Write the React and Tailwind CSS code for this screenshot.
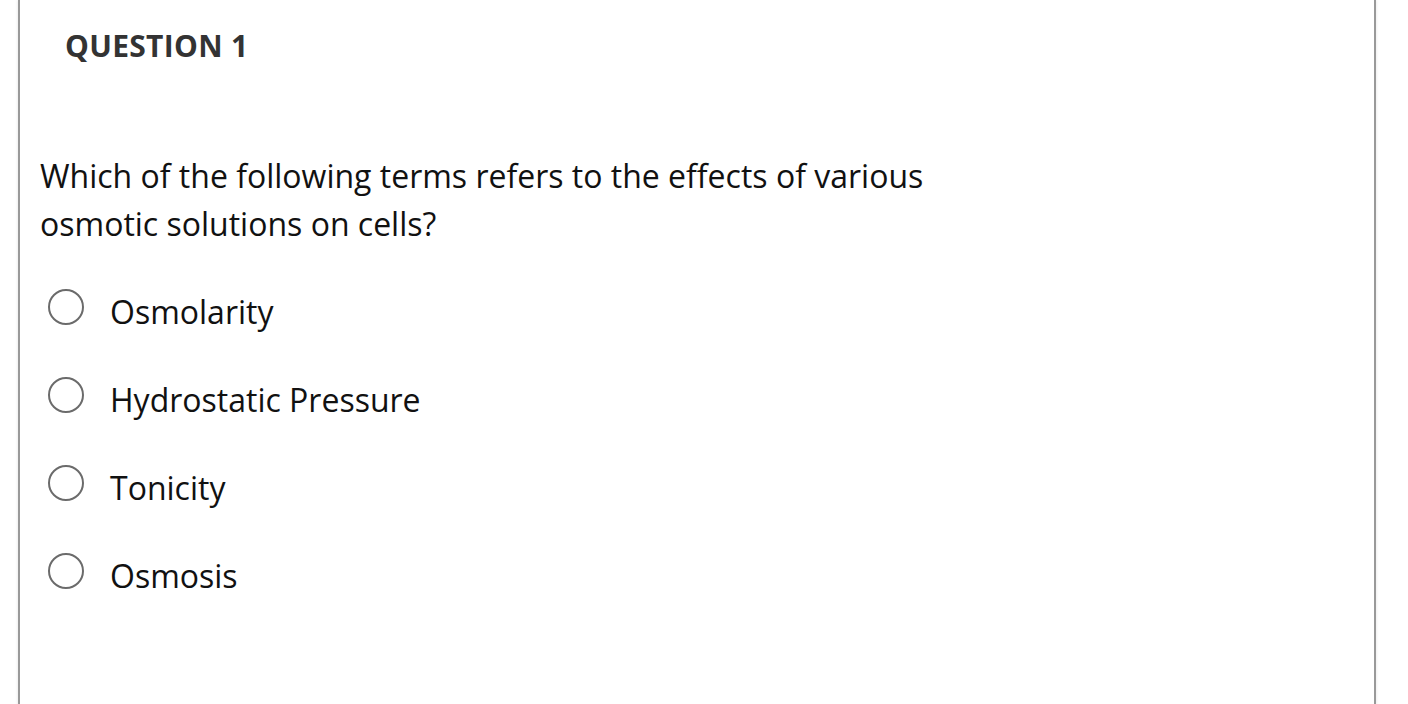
const options = ["Osmolarity", "Hydrostatic Pressure", "Tonicity", "Osmosis"];

function Radio() {
  return (
    <span className="block w-[36px] h-[36px] rounded-full border-2 border-[#6b6b6b] bg-white shrink-0" />
  );
}

export default function App() {
  return (
    <div className="w-[1408px] h-[704px] overflow-hidden bg-white font-['Open_Sans',sans-serif]">
      <div className="ml-[18px] w-[1358px] h-[720px] border-x-2 border-[#999999] bg-white shadow-[0_0_3px_rgba(0,0,0,0.12)]">
        <h2 className="pl-[45px] pt-[26px] text-[30px] leading-[40px] font-bold text-[#333333] tracking-[0.3px]">
          QUESTION 1
        </h2>
        <p className="mt-[86px] pl-[20px] w-[960px] text-[32px] leading-[48px] text-[#111111]">
          Which of the following terms refers to the effects of various
          osmotic solutions on cells?
        </p>
        <div className="mt-[35px] pl-[28px] space-y-[40px]">
          {options.map((opt) => (
            <label key={opt} className="flex items-center h-[48px]">
              <Radio />
              <span className="ml-[26px] mt-[9px] text-[32px] leading-[48px] text-[#111111]">{opt}</span>
            </label>
          ))}
        </div>
      </div>
    </div>
  );
}
